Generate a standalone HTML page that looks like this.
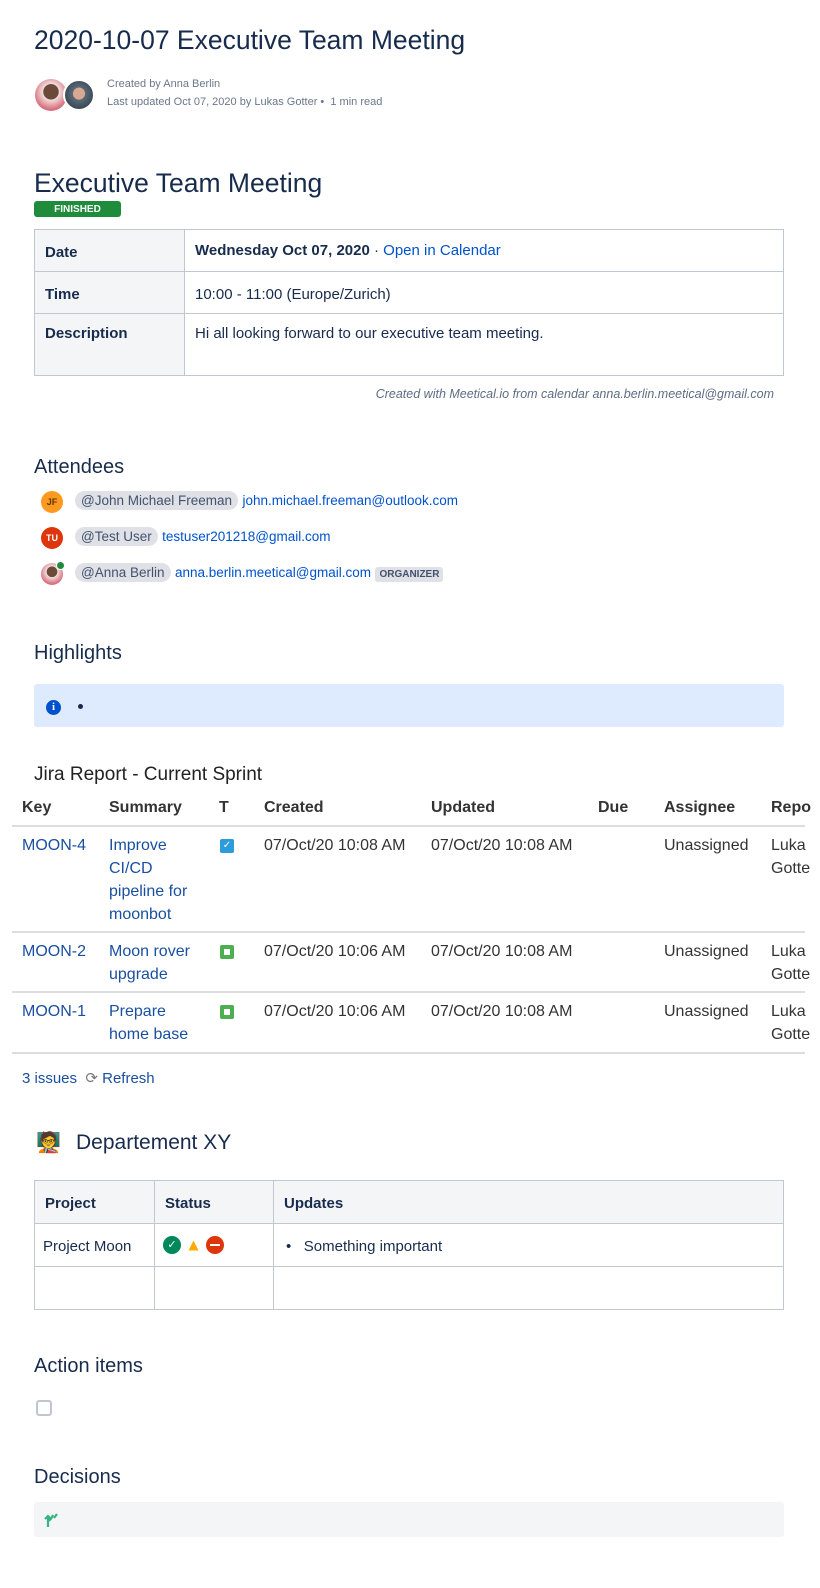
<!DOCTYPE html>
<html><head><meta charset="utf-8"><style>
*{margin:0;padding:0;box-sizing:border-box}
body{width:820px;height:1588px;background:#fff;font-family:"Liberation Sans",sans-serif;color:#172b4d;position:relative;overflow:hidden}
.a{position:absolute;white-space:nowrap}
h1,h2{font-weight:400;color:#172b4d}
.link{color:#0052cc}
table{border-collapse:collapse;position:absolute}
td{border:1px solid #c1c7d0;font-size:15px;line-height:17px;vertical-align:top}
.hd{background:#f4f5f7;font-weight:bold}
.mention{background:#dfe1e6;color:#42526e;border-radius:10px;padding:2px 6px;font-size:13.5px}
.av{position:absolute;width:22px;height:22px;border-radius:50%;color:#fff;font-size:9px;font-weight:bold;text-align:center;line-height:22px}
.j{position:absolute;font-size:16px;color:#333;line-height:23px}
.jl{color:#1a4fa0}
.jh{font-weight:bold}
.ln{position:absolute;left:12px;width:793px;height:2px;background:#ddd}
</style></head><body>
<h1 class="a" style="left:34px;top:25px;font-size:26.5px">2020-10-07 Executive Team Meeting</h1>
<div class="a" style="left:35px;top:79px;width:32px;height:32px;border-radius:50%;background:radial-gradient(circle at 50% 40%,#6b4a3a 30%,#f0dede 32%,#d9707e 70%)"></div>
<div class="a" style="left:63px;top:79px;width:32px;height:32px;border-radius:50%;border:2px solid #fff;background:radial-gradient(circle at 50% 45%,#d8a890 28%,#5a6a78 30%,#3d4a57 70%)"></div>
<div class="a" style="left:107px;top:78px;font-size:11px;color:#6b778c">Created by Anna Berlin</div>
<div class="a" style="left:107px;top:96px;font-size:11px;color:#6b778c">Last updated Oct 07, 2020 by Lukas Gotter • &nbsp;1 min read</div>

<h2 class="a" style="left:34px;top:168px;font-size:26.5px">Executive Team Meeting</h2>
<div class="a" style="left:34px;top:201px;width:87px;height:16px;background:#1e8c3a;border-radius:3px;color:#fff;font-size:10px;font-weight:bold;display:flex;align-items:center;justify-content:center">FINISHED</div>
<table style="left:34px;top:229px;width:750px">
<tr style="height:42px"><td class="hd" style="width:150px;padding:14px 10px 0">Date</td><td style="padding:12px 10px 0"><b>Wednesday Oct 07, 2020</b> · <span class="link">Open in Calendar</span></td></tr>
<tr style="height:42px"><td class="hd" style="padding:14px 10px 0">Time</td><td style="padding:14px 10px 0">10:00 - 11:00 (Europe/Zurich)</td></tr>
<tr style="height:62px"><td class="hd" style="padding:11px 10px 0">Description</td><td style="padding:11px 10px 0">Hi all looking forward to our executive team meeting.</td></tr>
</table>
<div class="a" style="right:46px;top:387px;font-size:12.5px;font-style:italic;color:#5e6c84">Created with Meetical.io from calendar anna.berlin.meetical@gmail.com</div>

<h2 class="a" style="left:34px;top:456px;font-size:20px">Attendees</h2>
<div class="av" style="left:41px;top:491px;background:#ff991f;color:#5a3a00">JF</div>
<div class="a" style="left:75px;top:492px"><span class="mention">@John Michael Freeman</span> <span class="link" style="font-size:13.5px">john.michael.freeman@outlook.com</span></div>
<div class="av" style="left:41px;top:527px;background:#de350b">TU</div>
<div class="a" style="left:75px;top:528px"><span class="mention">@Test User</span> <span class="link" style="font-size:13.5px">testuser201218@gmail.com</span></div>
<div class="av" style="left:41px;top:563px;background:radial-gradient(circle at 50% 40%,#6b4a3a 30%,#f0dede 32%,#d9707e 70%)"></div>
<div class="a" style="left:56px;top:561px;width:9px;height:9px;border-radius:50%;background:#1e8c3a;border:1px solid #fff"></div>
<div class="a" style="left:75px;top:564px"><span class="mention">@Anna Berlin</span> <span class="link" style="font-size:13.5px">anna.berlin.meetical@gmail.com</span> <span style="background:#dfe1e6;color:#42526e;font-size:10px;font-weight:bold;padding:2px 4px;border-radius:3px">ORGANIZER</span></div>

<h2 class="a" style="left:34px;top:642px;font-size:20px">Highlights</h2>
<div class="a" style="left:34px;top:684px;width:750px;height:43px;background:#deebff;border-radius:3px"></div>
<div class="a" style="left:46px;top:700px;width:15px;height:15px;border-radius:50%;background:#0052cc;color:#fff;font-size:11px;font-weight:bold;text-align:center;line-height:15px;font-family:'Liberation Serif',serif">i</div>
<div class="a" style="left:78px;top:704px;width:5px;height:5px;border-radius:50%;background:#172b4d"></div>

<div class="a" style="left:34px;top:764px;font-size:19px;color:#222">Jira Report - Current Sprint</div>
<div class="j jh" style="left:22px;top:796px">Key</div>
<div class="j jh" style="left:109px;top:796px">Summary</div>
<div class="j jh" style="left:219px;top:796px">T</div>
<div class="j jh" style="left:264px;top:796px">Created</div>
<div class="j jh" style="left:431px;top:796px">Updated</div>
<div class="j jh" style="left:598px;top:796px">Due</div>
<div class="j jh" style="left:664px;top:796px">Assignee</div>
<div class="j jh" style="left:771px;top:796px">Repo</div>
<div class="ln" style="top:825px"></div>
<div class="j jl" style="left:22px;top:834px">MOON-4</div>
<div class="j jl" style="left:109px;top:834px">Improve<br>CI/CD<br>pipeline for<br>moonbot</div>
<div class="a" style="left:220px;top:839px;width:14px;height:14px;background:#2d9cdb;border-radius:2px;color:#fff;font-size:10px;text-align:center;line-height:14px">✓</div>
<div class="j" style="left:264px;top:834px">07/Oct/20 10:08 AM</div>
<div class="j" style="left:431px;top:834px">07/Oct/20 10:08 AM</div>
<div class="j" style="left:664px;top:834px">Unassigned</div>
<div class="j" style="left:771px;top:834px">Luka<br>Gotte</div>
<div class="ln" style="top:931px"></div>
<div class="j jl" style="left:22px;top:940px">MOON-2</div>
<div class="j jl" style="left:109px;top:940px">Moon rover<br>upgrade</div>
<div class="a" style="left:220px;top:945px;width:14px;height:14px;background:#4caf50;border-radius:2px"><div style="margin:4px;width:6px;height:6px;background:#fff"></div></div>
<div class="j" style="left:264px;top:940px">07/Oct/20 10:06 AM</div>
<div class="j" style="left:431px;top:940px">07/Oct/20 10:08 AM</div>
<div class="j" style="left:664px;top:940px">Unassigned</div>
<div class="j" style="left:771px;top:940px">Luka<br>Gotte</div>
<div class="ln" style="top:991px"></div>
<div class="j jl" style="left:22px;top:1000px">MOON-1</div>
<div class="j jl" style="left:109px;top:1000px">Prepare<br>home base</div>
<div class="a" style="left:220px;top:1005px;width:14px;height:14px;background:#4caf50;border-radius:2px"><div style="margin:4px;width:6px;height:6px;background:#fff"></div></div>
<div class="j" style="left:264px;top:1000px">07/Oct/20 10:06 AM</div>
<div class="j" style="left:431px;top:1000px">07/Oct/20 10:08 AM</div>
<div class="j" style="left:664px;top:1000px">Unassigned</div>
<div class="j" style="left:771px;top:1000px">Luka<br>Gotte</div>
<div class="ln" style="top:1052px"></div>
<div class="j jl" style="left:22px;top:1067px;font-size:15px">3 issues &nbsp;<span style="color:#777">⟳</span> Refresh</div>

<div class="a" style="left:36px;top:1131px;width:24px;height:24px;font-size:20px;line-height:24px">🧑‍🏫</div>
<h2 class="a" style="left:76px;top:1131px;font-size:21px">Departement XY</h2>
<table style="left:34px;top:1180px;width:750px">
<tr style="height:43px"><td class="hd" style="width:120px;padding:14px 10px 0">Project</td><td class="hd" style="width:119px;padding:14px 10px 0">Status</td><td class="hd" style="padding:14px 10px 0">Updates</td></tr>
<tr style="height:43px"><td style="padding:14px 8px 0">Project Moon</td><td style="padding:12px 8px 0"><span style="display:inline-block;width:18px;height:18px;border-radius:50%;background:#00875a;color:#fff;font-size:11px;text-align:center;line-height:18px;vertical-align:middle">✓</span> <span style="color:#ffab00;font-size:17px;vertical-align:middle">▲</span> <span style="display:inline-block;width:18px;height:18px;border-radius:50%;background:#de350b;vertical-align:middle;position:relative"><span style="position:absolute;left:4px;top:8px;width:10px;height:2px;background:#fff"></span></span></td><td style="padding:14px 12px 0">•&nbsp;&nbsp; Something important</td></tr>
<tr style="height:43px"><td></td><td></td><td></td></tr>
</table>

<h2 class="a" style="left:34px;top:1355px;font-size:20px">Action items</h2>
<div class="a" style="left:36px;top:1400px;width:16px;height:16px;border:2px solid #c1c7d0;border-radius:3px"></div>
<h2 class="a" style="left:34px;top:1466px;font-size:20px">Decisions</h2>
<div class="a" style="left:34px;top:1502px;width:750px;height:35px;background:#f4f5f7;border-radius:3px"></div>
<svg class="a" style="left:44px;top:1512px" width="18" height="16" viewBox="0 0 18 16"><path d="M4 15V5M1 7l3-3 3 3M4 9q3-1 5-6M10 6l3-4" stroke="#36b37e" stroke-width="2.2" fill="none"/></svg>
</body></html>
